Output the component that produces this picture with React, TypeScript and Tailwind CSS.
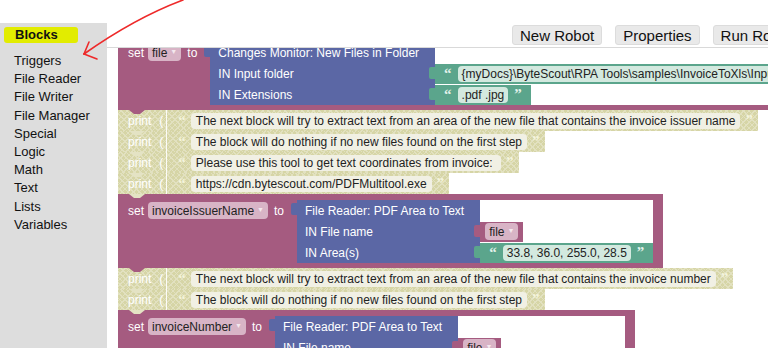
import type { ReactNode } from "react";

const VarChip = ({ name }: { name: string }) => (
  <span className="flex h-[17px] items-center gap-[3px] rounded-[4px] bg-[#d8b4c6] px-[4px] text-[#222]">
    {name}
    <span className="text-[7px] text-[#f4e8ee]">▼</span>
  </span>
);

const Tab = ({ color }: { color: string }) => (
  <span
    className={`absolute -left-[6px] top-[3px] h-[12px] w-[6px] rounded-l-[2px] ${color}`}
  />
);

const Quote = ({ mark, color }: { mark: string; color: string }) => (
  <span className={`font-['Liberation_Serif',serif] text-[15px] font-bold leading-none ${color}`}>{mark}</span>
);

const StringBlock = ({ text }: { text: string }) => (
  <div className="relative flex h-[20px] items-center gap-[6px] bg-[#5ba58c] pl-[9px] pr-[9px]">
    <Tab color="bg-[#5ba58c]" />
    <Quote mark="“" color="text-[#e4f2eb]" />
    <span className="flex h-[16px] items-center whitespace-nowrap rounded-[4px] bg-[#d3e9df] px-[4px] text-[#222]">
      {text}
    </span>
    <Quote mark="”" color="text-[#e4f2eb]" />
  </div>
);

const VarBlock = ({ name }: { name: string }) => (
  <div className="relative flex h-[20px] items-center bg-[#a55b80] px-[5px]">
    <Tab color="bg-[#a55b80]" />
    <VarChip name={name} />
  </div>
);

type Row = { label: string; value: ReactNode };

const BlueBlock = ({ title, rows }: { title: string; rows: Row[] }) => (
  <div className="relative flex">
    <Tab color="bg-[#5b67a5]" />
    <div className="flex flex-col bg-[#5b67a5] text-white">
      <div className="flex h-[21px] items-center whitespace-nowrap pl-[8px] pr-[16px]">{title}</div>
      {rows.map((r) => (
        <div key={r.label} className="flex h-[21px] items-center whitespace-nowrap pl-[8px]">
          {r.label}
        </div>
      ))}
    </div>
    <div className="flex flex-col">
      <div className="h-[21px]" />
      {rows.map((r) => (
        <div key={r.label} className="flex h-[21px] items-center">
          {r.value}
        </div>
      ))}
    </div>
  </div>
);

const Notch = ({ fill }: { fill: string }) => (
  <svg className="absolute -bottom-[4px] left-[11px] z-10" width="16" height="4" viewBox="0 0 16 4">
    <polygon points="0,0 16,0 11,4 5,4" fill={fill} />
  </svg>
);

const SetBlock = ({ name, children, first }: { name: string; children: ReactNode; first?: boolean }) => (
  <div
    className={`relative flex w-max shrink-0 bg-[#a55b80] pb-[5px] pr-[10px] pt-[6px] ${first ? "-mt-[12px]" : ""}`}
  >
    <div className="flex h-[21px] items-center gap-[4px] pl-[10px] pr-[13px] text-white">
      <span>set</span>
      <VarChip name={name} />
      <span className="ml-[2px]">to</span>
    </div>
    <div className="bg-white">{children}</div>
    <Notch fill="#a55b80" />
  </div>
);

const PrintBlock = ({ text }: { text: string }) => (
  <div className="relative flex h-[21px] w-max shrink-0 items-center bg-[#d6d5a6] bg-[image:repeating-linear-gradient(45deg,#e2e1c0_0px,#e2e1c0_1px,transparent_1px,transparent_4px),repeating-linear-gradient(-45deg,#e2e1c0_0px,#e2e1c0_1px,transparent_1px,transparent_4px)] pl-[10px] pr-[5px]">
    <span className="text-white">print</span>
    <span className="ml-[8px] text-white">(</span>
    <span className="ml-[3px] h-full w-px bg-white/90" />
    <span className="ml-[11px]">
      <Quote mark="“" color="text-[#f4f4dc]" />
    </span>
    <span className="ml-[5px] flex h-[16px] items-center whitespace-nowrap rounded-[4px] bg-[#f1f0e4] px-[5px] text-[#222]">
      {text}
    </span>
    <span className="ml-[5px]">
      <Quote mark="”" color="text-[#f4f4dc]" />
    </span>
    <Notch fill="#e4e3c4" />
  </div>
);

const categories = [
  "Triggers",
  "File Reader",
  "File Writer",
  "File Manager",
  "Special",
  "Logic",
  "Math",
  "Text",
  "Lists",
  "Variables",
];

export default function App() {
  return (
    <div className="relative flex h-[348px] w-[768px] overflow-hidden bg-white pt-[23px] font-['Liberation_Sans',Arial,sans-serif] text-[13px] text-[#111]">
      <aside className="w-[107px] shrink-0 bg-[#dddddd] pt-[4px]">
        <div className="ml-[4px] w-[74px] rounded-[3px] bg-[#e2ec00] pl-[11px] text-[13px] font-bold leading-[16px]">
          Blocks
        </div>
        <ul className="mt-[9px] pl-[14px] leading-[18.2px]">
          {categories.map((c) => (
            <li key={c}>{c}</li>
          ))}
        </ul>
      </aside>

      <main className="flex min-w-0 flex-1 flex-col">
        <div className="flex h-[24px] shrink-0 items-start gap-[13px] overflow-hidden pl-[405px] pt-[2px]">
          {["New Robot", "Properties", "Run Robot"].map((b) => (
            <button
              key={b}
              className="flex h-[20px] shrink-0 items-center whitespace-nowrap rounded-[3px] border border-[#dcdcdc] bg-[#e9e9e9] px-[7px] text-[15px] leading-none text-[#111]"
            >
              {b}
            </button>
          ))}
        </div>

        <div className="flex min-h-0 flex-1 flex-col items-start overflow-hidden border-t border-[#d9d9d9] pl-[11px] text-[12px]">
          <SetBlock name="file" first>
            <BlueBlock
              title="Changes Monitor: New Files in Folder"
              rows={[
                {
                  label: "IN Input folder",
                  value: <StringBlock text={"{myDocs}\\ByteScout\\RPA Tools\\samples\\InvoiceToXls\\Input"} />,
                },
                { label: "IN Extensions", value: <StringBlock text=".pdf .jpg" /> },
              ]}
            />
          </SetBlock>
          <PrintBlock text="The next block will try to extract text from an area of the new file that contains the invoice issuer name" />
          <PrintBlock text="The block will do nothing if no new files found on the first step" />
          <PrintBlock text={"Please use this tool to get text coordinates from invoice:\u00a0"} />
          <PrintBlock text="https://cdn.bytescout.com/PDFMultitool.exe" />
          <SetBlock name="invoiceIssuerName">
            <BlueBlock
              title="File Reader: PDF Area to Text"
              rows={[
                { label: "IN File name", value: <VarBlock name="file" /> },
                { label: "IN Area(s)", value: <StringBlock text="33.8, 36.0, 255.0, 28.5" /> },
              ]}
            />
          </SetBlock>
          <PrintBlock text="The next block will try to extract text from an area of the new file that contains the invoice number" />
          <PrintBlock text="The block will do nothing if no new files found on the first step" />
          <SetBlock name="invoiceNumber">
            <BlueBlock
              title="File Reader: PDF Area to Text"
              rows={[
                { label: "IN File name", value: <VarBlock name="file" /> },
                { label: "IN Area(s)", value: <StringBlock text="33.8, 72.0, 99.0, 28.5" /> },
              ]}
            />
          </SetBlock>
        </div>
      </main>

      <svg
        className="pointer-events-none absolute left-0 top-0"
        width="200"
        height="70"
        viewBox="0 0 200 70"
        fill="none"
        stroke="#ee2a2a"
        strokeWidth="1.6"
        strokeLinecap="round"
      >
        <path d="M183 0 Q135 18 84 54" />
        <path d="M84 54 L89 42" />
        <path d="M84 54 L97 59" />
      </svg>
    </div>
  );
}
